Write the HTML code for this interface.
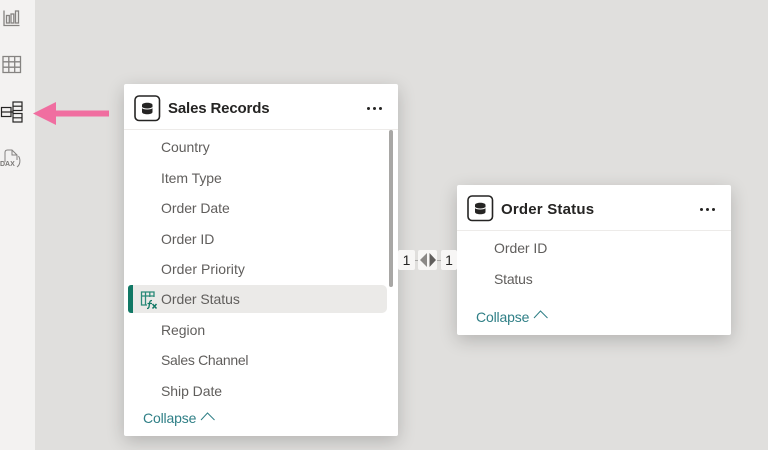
<!DOCTYPE html>
<html><head><meta charset="utf-8"><style>
html,body{margin:0;padding:0}
body{width:768px;height:450px;overflow:hidden;position:relative;background:#e0dfdd;font-family:"Liberation Sans",sans-serif}
.side{position:absolute;left:0;top:0;width:35px;height:450px;background:#f3f2f1}
.card{position:absolute;width:274px;background:#fff;border-radius:2px;box-shadow:0 5px 18px rgba(0,0,0,.2)}
.hl{position:absolute;left:0;right:0;height:1px;background:#edebe9}
.t{position:absolute;white-space:nowrap;line-height:18px}
.f{font-size:14px;color:#605e5c;letter-spacing:-.05px}
.h{font-size:15px;font-weight:bold;color:#252423;letter-spacing:.2px;line-height:20px}
.c{font-size:14px;color:#2f7f86;letter-spacing:-.15px}
.d{position:absolute;width:3px;height:3px;border-radius:50%;background:#252423}
svg{position:absolute;overflow:visible}
.b{position:absolute;background:#f7f6f5;border-radius:2px;top:250px;height:20px;font-size:14px;line-height:20px;text-align:center;color:#252423}
</style></head><body>
<div class="side"></div>
<svg style="left:0;top:0" width="35" height="180" fill="none" stroke="#858381" stroke-width="1.3">
<path d="M4 10.5V25.5H19.5"/><rect x="6.5" y="15.5" width="2.8" height="7.5"/><rect x="11" y="14" width="2.8" height="9"/><rect x="15.5" y="11" width="3" height="12"/>
<path d="M3 56.5H20.5V72.5H3ZM3 61.8H20.5M3 67.2H20.5M8.8 56.5V72.5M14.7 56.5V72.5"/>
<g stroke="#252423" stroke-width="1.2"><rect x="1.5" y="107.5" width="9.5" height="9"/><path d="M1.5 112H11"/><rect x="13" y="102" width="9" height="8.5"/><path d="M13 106.2H22"/><rect x="13" y="113.5" width="9" height="8.5"/><path d="M13 117.8H22M11 112H13M13 110.5V113.5"/></g>
<path d="M5 162V152.5C5 150.5 6 150 7.5 150H12L17 155V160M12 150V155H17M18.5 156C21 160 20 165 17 167" stroke-width="1"/>
</svg>
<div class="t" style="left:0;top:160px;font-size:7px;font-weight:bold;color:#7a7876;line-height:9px">DAX</div>
<svg style="left:33px;top:100px" width="80" height="28"><path d="M0 13.5L23 2V10.5H76V16.5H23V25Z" fill="#f06ea0"/></svg>

<div class="card" style="left:124px;top:84px;height:352px"><div class="hl" style="top:45px"></div></div>
<div class="card" style="left:457px;top:185px;height:150px"><div class="hl" style="top:45px"></div></div>

<svg style="left:134px;top:95px" width="27" height="27"><rect x="1" y="1" width="24.5" height="24.5" rx="4" fill="#fff" stroke="#252423" stroke-width="1.6"/><path d="M8 10C8 7 18.5 7 18.5 10V17C18.5 20 8 20 8 17Z" fill="#252423"/><path d="M8 12.5C10 14.5 16.5 14.5 18.5 12.5" stroke="#fff" fill="none" stroke-width="1.1"/></svg>
<div class="t h" style="left:168px;top:99px;letter-spacing:-.15px">Sales Records</div>
<div class="d" style="left:367px;top:107px"></div><div class="d" style="left:373px;top:107px"></div><div class="d" style="left:379px;top:107px"></div>

<div style="position:absolute;left:389px;top:130px;width:4px;height:157px;background:#a8a7a5;border-radius:2px"></div>
<div style="position:absolute;left:128px;top:285px;width:259px;height:28px;background:#ebeae8;border-radius:5px"></div>
<div style="position:absolute;left:128px;top:285px;width:5px;height:28px;background:#117865;border-radius:3px 0 0 3px"></div>
<svg style="left:140px;top:291px" width="18" height="18" fill="none" stroke="#2a8a78" stroke-width="1.3"><path d="M7 14H1.5V1H14V6"/><path d="M5.5 1V14M1.5 5H14M9.8 1V6"/><path d="M7 17.5C9.5 17.5 9 15 9.5 12.5C9.8 10.5 10 9.5 12 9.5M7.5 12.5H12" stroke="#117865"/><path d="M12.5 13L16.5 17.5M16.5 13L12.5 17.5" stroke="#117865" stroke-width="1.5"/></svg>

<div class="t f" style="left:161px;top:138px">Country</div>
<div class="t f" style="left:161px;top:169px">Item Type</div>
<div class="t f" style="left:161px;top:199px">Order Date</div>
<div class="t f" style="left:161px;top:230px">Order ID</div>
<div class="t f" style="left:161px;top:260px;letter-spacing:.05px">Order Priority</div>
<div class="t f" style="left:161px;top:290px">Order Status</div>
<div class="t f" style="left:161px;top:321px">Region</div>
<div class="t f" style="left:161px;top:351px;letter-spacing:-.3px">Sales Channel</div>
<div class="t f" style="left:161px;top:382px">Ship Date</div>
<div class="t c" style="left:143px;top:409px">Collapse</div>
<svg style="left:200px;top:411px" width="16" height="12" fill="none" stroke="#2f7f86" stroke-width="1"><path d="M1 9L7.5 2L14.5 9"/></svg>

<svg style="left:467px;top:195px" width="27" height="27"><rect x="1" y="1" width="24.5" height="24.5" rx="4" fill="#fff" stroke="#252423" stroke-width="1.6"/><path d="M8 10C8 7 18.5 7 18.5 10V17C18.5 20 8 20 8 17Z" fill="#252423"/><path d="M8 12.5C10 14.5 16.5 14.5 18.5 12.5" stroke="#fff" fill="none" stroke-width="1.1"/></svg>
<div class="t h" style="left:501px;top:200px">Order Status</div>
<div class="d" style="left:700px;top:208px"></div><div class="d" style="left:706px;top:208px"></div><div class="d" style="left:712px;top:208px"></div>
<div class="t f" style="left:494px;top:239px">Order ID</div>
<div class="t f" style="left:494px;top:270px;letter-spacing:-.2px">Status</div>
<div class="t c" style="left:476px;top:308px">Collapse</div>
<svg style="left:533px;top:309px" width="16" height="12" fill="none" stroke="#2f7f86" stroke-width="1"><path d="M1 9L7.5 2L14.5 9"/></svg>

<div style="position:absolute;left:398px;top:260px;width:59px;height:1px;background:#a8a7a5"></div>
<div class="b" style="left:398px;width:17px">1</div>
<div class="b" style="left:418px;width:19px"></div>
<div class="b" style="left:441px;width:16px">1</div>
<svg style="left:419px;top:252px" width="18" height="16" fill="#8a8886"><path d="M8 1V15L1 8Z"/><path d="M10.5 1V15L17 8Z" fill="#605e5c"/></svg>
</body></html>
